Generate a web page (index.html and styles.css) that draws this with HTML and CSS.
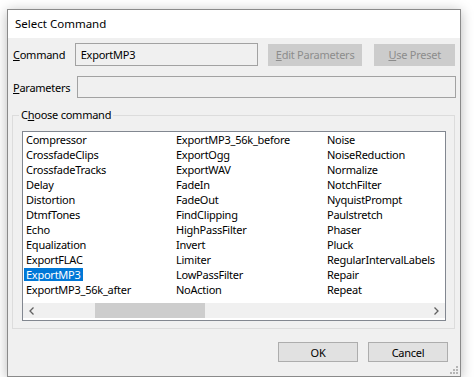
FILE: index.html
```
<!DOCTYPE html>
<html lang="en">
<head>
    <meta charset="UTF-8">
    <title>Select Command</title>
    <link rel="stylesheet" href="styles.css">
</head>
<body>

<div class="window">
    <div class="titlebar">Select Command</div>

    <div class="client">
        <!-- Command row -->
        <div class="row">
            <label class="lbl lbl-cmd"><u>C</u>ommand</label>
            <div class="field field-cmd">ExportMP3</div>
            <button class="btn btn-off btn-edit" disabled><u>E</u>dit Parameters</button>
            <button class="btn btn-off btn-preset" disabled><u>U</u>se Preset</button>
        </div>

        <!-- Parameters row -->
        <div class="row row-params">
            <label class="lbl lbl-par"><u>P</u>arameters</label>
            <div class="field field-par"></div>
        </div>

        <!-- Command list -->
        <fieldset class="group">
            <legend>C<u>h</u>oose command</legend>
            <div class="list">
                <div class="cols">
                    <div class="col">
                        <div class="item">Compressor</div>
                        <div class="item">CrossfadeClips</div>
                        <div class="item">CrossfadeTracks</div>
                        <div class="item">Delay</div>
                        <div class="item">Distortion</div>
                        <div class="item">DtmfTones</div>
                        <div class="item">Echo</div>
                        <div class="item">Equalization</div>
                        <div class="item">ExportFLAC</div>
                        <div class="item"><span class="sel">ExportMP3</span></div>
                        <div class="item">ExportMP3_56k_after</div>
                    </div>
                    <div class="col">
                        <div class="item">ExportMP3_56k_before</div>
                        <div class="item">ExportOgg</div>
                        <div class="item">ExportWAV</div>
                        <div class="item">FadeIn</div>
                        <div class="item">FadeOut</div>
                        <div class="item">FindClipping</div>
                        <div class="item">HighPassFilter</div>
                        <div class="item">Invert</div>
                        <div class="item">Limiter</div>
                        <div class="item">LowPassFilter</div>
                        <div class="item">NoAction</div>
                    </div>
                    <div class="col">
                        <div class="item">Noise</div>
                        <div class="item">NoiseReduction</div>
                        <div class="item">Normalize</div>
                        <div class="item">NotchFilter</div>
                        <div class="item">NyquistPrompt</div>
                        <div class="item">Paulstretch</div>
                        <div class="item">Phaser</div>
                        <div class="item">Pluck</div>
                        <div class="item">RegularIntervalLabels</div>
                        <div class="item">Repair</div>
                        <div class="item">Repeat</div>
                    </div>
                </div>

                <div class="hscroll">
                    <div class="arrow">
                        <svg width="5" height="8" viewBox="0 0 5 8"><polyline points="4.5,0.5 1,4 4.5,7.5" fill="none" stroke="#606060" stroke-width="1.3"/></svg>
                    </div>
                    <div class="track"><div class="thumb"></div></div>
                    <div class="arrow">
                        <svg width="5" height="8" viewBox="0 0 5 8"><polyline points="0.5,0.5 4,4 0.5,7.5" fill="none" stroke="#606060" stroke-width="1.3"/></svg>
                    </div>
                </div>
            </div>
        </fieldset>

        <div class="actions">
            <button class="btn btn-std">OK</button>
            <button class="btn btn-std">Cancel</button>
        </div>
    </div>

    <svg class="grip" width="8" height="8" viewBox="0 0 8 8">
        <rect x="6" y="0" width="2" height="2" fill="#b5b5b5"/>
        <rect x="3" y="3" width="2" height="2" fill="#b5b5b5"/>
        <rect x="6" y="3" width="2" height="2" fill="#b5b5b5"/>
        <rect x="0" y="6" width="2" height="2" fill="#b5b5b5"/>
        <rect x="3" y="6" width="2" height="2" fill="#b5b5b5"/>
        <rect x="6" y="6" width="2" height="2" fill="#b5b5b5"/>
    </svg>
</div>

</body>
</html>
```

FILE: styles.css
```
/* Page */
body {
    margin: 0;
    background: #ffffff;
    font-family: 'Noto Sans', 'Open Sans', sans-serif;
    font-size: 11px;
    letter-spacing: -0.25px;
    color: #000;
}

/* Dialog window */
.window {
    position: relative;
    box-sizing: border-box;
    width: 454px;
    height: 368px;
    margin: 9px 0 0 7px;
    border: 1px solid #8a8a8a;
    background: #f0f0f0;
    box-shadow: 0 2px 12px rgba(0, 0, 0, 0.28);
    display: flex;
    flex-direction: column;
}

.titlebar {
    height: 28px;
    line-height: 28px;
    padding-left: 7px;
    background: #ffffff;
    font-size: 11.5px;
    letter-spacing: 0;
}

.client {
    flex: 1;
    display: flex;
    flex-direction: column;
    padding-top: 5px;
}

/* Top rows */
.row {
    display: flex;
    align-items: center;
    padding: 0 5px;
}

.row-params {
    margin-top: 10px;
}

.lbl-cmd { width: 62px; }
.lbl-par { width: 64px; }

.field {
    box-sizing: border-box;
    border: 1px solid #a2a2a2;
    background: #f0f0f0;
    padding-left: 5px;
}

.field-cmd {
    width: 184px;
    height: 23px;
    line-height: 21px;
}

.field-par {
    flex: 1;
    height: 22px;
    margin-right: -1px;
}

/* Buttons */
.btn {
    box-sizing: border-box;
    font-family: inherit;
    font-size: 11px;
    letter-spacing: -0.25px;
    padding: 0;
    border: 1px solid #adadad;
    background: #e1e1e1;
    color: #000;
}

.btn-off {
    height: 22px;
    border-color: #cccccc;
    background: #cccccc;
    color: #8c8c8c;
}

.btn-edit {
    width: 95px;
    margin-left: 10px;
}

.btn-preset {
    width: 81px;
    margin-left: 12px;
}

.btn-std {
    width: 80px;
    height: 20px;
}

/* Group box */
.group {
    margin: 9px 5px 0 4px;
    padding: 8px 8px 7px 9px;
    border: 1px solid #dcdcdc;
    min-width: 0;
}

.group legend {
    padding: 0 2px;
    margin-left: -3px;
    line-height: 16px;
}

/* List box */
.list {
    box-sizing: border-box;
    height: 190px;
    border: 1px solid #828790;
    background: #ffffff;
    display: flex;
    flex-direction: column;
}

.cols {
    flex: 1;
    display: grid;
    grid-template-columns: 150px 151px 1fr;
    padding-left: 1px;
}

.item {
    height: 15px;
    line-height: 15px;
    padding-left: 2px;
    white-space: nowrap;
}

.sel {
    display: inline-block;
    line-height: 13px;
    margin-left: -2px;
    padding: 0 2px;
    background: #0078d7;
    color: #ffffff;
}

.hscroll {
    height: 15px;
    margin-bottom: 2px;
    display: flex;
    background: #f0f0f0;
}

.arrow {
    width: 17px;
    display: flex;
    align-items: center;
    justify-content: center;
}

.track {
    flex: 1;
}

.thumb {
    width: 110px;
    height: 100%;
    margin-left: 55px;
    background: #cdcdcd;
}

/* Bottom buttons */
.actions {
    display: flex;
    justify-content: flex-end;
    gap: 10px;
    margin: 13px 12px 0 0;
}

/* Size grip */
.grip {
    position: absolute;
    right: 2px;
    bottom: 2px;
}
```
